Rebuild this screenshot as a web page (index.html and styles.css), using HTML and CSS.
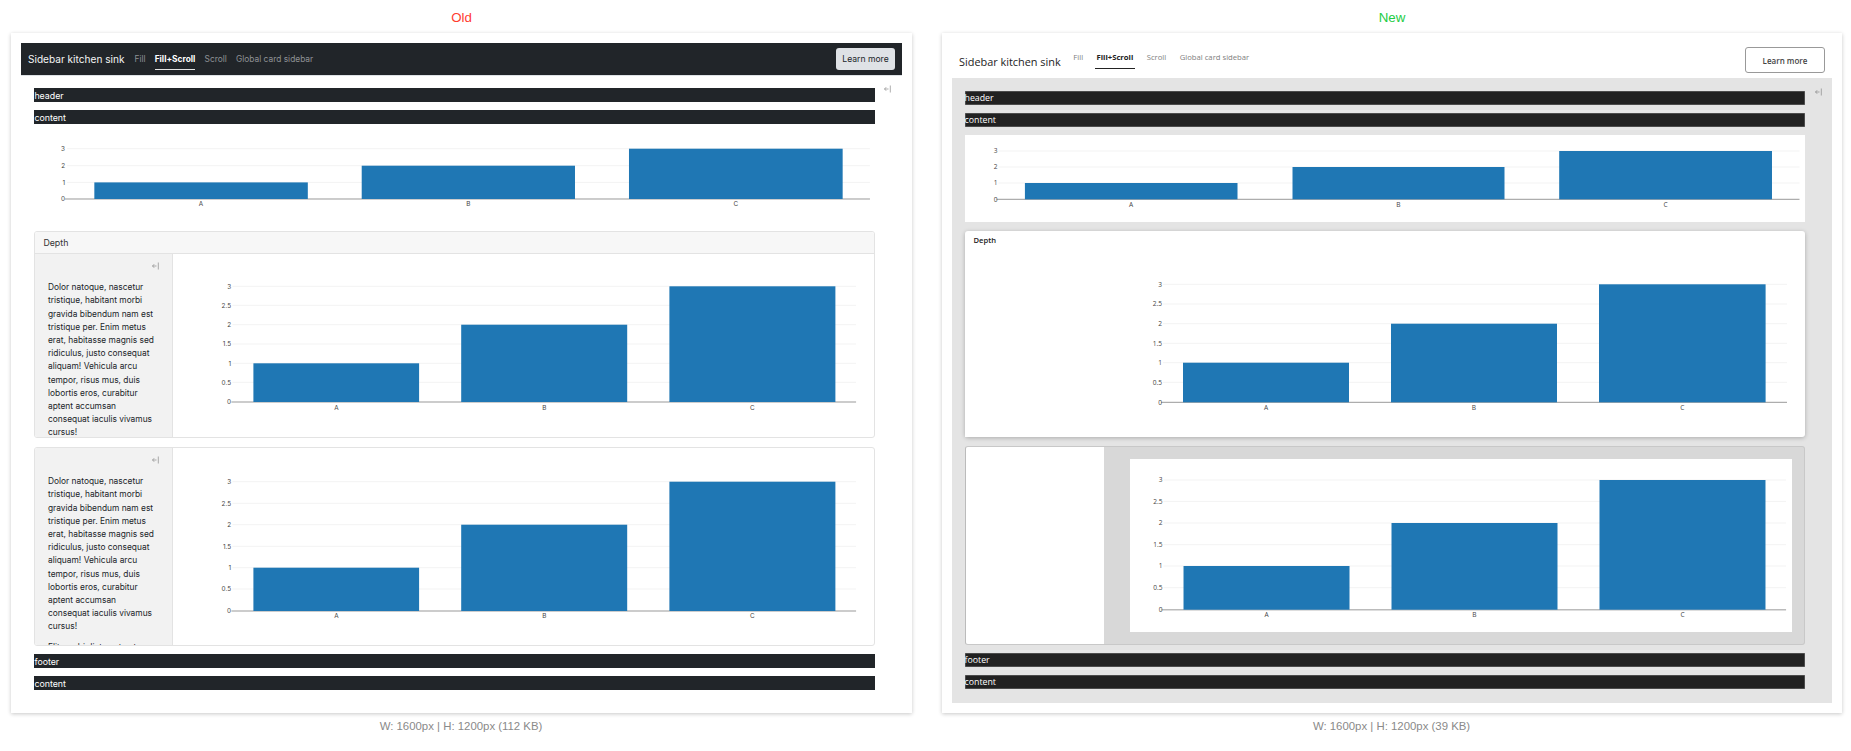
FILE: index.html
```html
<!DOCTYPE html>
<html lang="en">
<head>
<meta charset="utf-8">
<title>Sidebar kitchen sink</title>
<link rel="stylesheet" href="styles.css">
</head>
<body>
<div class="compare">
  <section class="col col-old">
    <h2 class="label label-old">Old</h2>
    <div class="shot">
      <nav class="nav-old">
        <span class="brand-old">Sidebar kitchen sink</span>
        <a class="link-old">Fill</a>
        <a class="link-old active">Fill+Scroll</a>
        <a class="link-old">Scroll</a>
        <a class="link-old">Global card sidebar</a>
        <button class="btn-old">Learn more</button>
      </nav>
      <main class="main-old">
        <svg class="collapse collapse-page-old" viewBox="0 0 7 8"><path d="M0.5 4H4.5M2.2 2.2L0.5 4L2.2 5.8M6.3 0.5V7.5"/></svg>
        <div class="bar bar-old">header</div>
        <div class="bar bar-old">content</div>
        <svg class="chart" width="840.6" height="90.4" viewBox="34 132.3 840.6 90.4">
          <path class="grid" d="M67 149H870M67 166H870M67 182.7H870"/>
          <path class="axis" d="M65 199.3H870"/>
          <rect class="col-bar" x="94.3" y="182.7" width="213.5" height="16.6"/>
          <rect class="col-bar" x="361.7" y="166" width="213.3" height="33.3"/>
          <rect class="col-bar" x="629" y="149" width="213.7" height="50.3"/>
          <text class="tick" text-anchor="end" x="65" y="151.3">3</text>
          <text class="tick" text-anchor="end" x="65" y="168.3">2</text>
          <text class="tick" text-anchor="end" x="65" y="185">1</text>
          <text class="tick" text-anchor="end" x="65" y="201.6">0</text>
          <text class="tick" text-anchor="middle" x="201" y="206.8">A</text>
          <text class="tick" text-anchor="middle" x="468.4" y="206.8">B</text>
          <text class="tick" text-anchor="middle" x="735.8" y="206.8">C</text>
        </svg>
        <div class="card-old card-depth-old">
          <div class="card-head-old">Depth</div>
          <div class="card-body-old">
            <aside class="side-old side-depth">
              <svg class="collapse" viewBox="0 0 7 8"><path d="M0.5 4H4.5M2.2 2.2L0.5 4L2.2 5.8M6.3 0.5V7.5"/></svg>
              <p>Dolor natoque, nascetur tristique, habitant morbi gravida bibendum nam est tristique per. Enim metus erat, habitasse magnis sed ridiculus, justo consequat aliquam! Vehicula arcu tempor, risus mus, duis lobortis eros, curabitur aptent accumsan consequat iaculis vivamus cursus!</p>
            </aside>
            <svg class="chart" width="703.4" height="184" viewBox="172.6 254 703.4 184">
              <path class="grid" d="M232 286.3H855.7M232 305.3H855.7M232 324.7H855.7M232 344H855.7M232 363.3H855.7M232 382.3H855.7"/>
              <path class="axis axis-light" d="M231 402H855.7"/>
              <rect class="col-bar" x="253" y="363.3" width="165.7" height="38.7"/>
              <rect class="col-bar" x="460.8" y="324.7" width="166" height="77.3"/>
              <rect class="col-bar" x="669" y="286.3" width="166" height="115.7"/>
              <text class="tick" text-anchor="end" x="230.7" y="288.6">3</text>
              <text class="tick" text-anchor="end" x="230.7" y="307.6">2.5</text>
              <text class="tick" text-anchor="end" x="230.7" y="327">2</text>
              <text class="tick" text-anchor="end" x="230.7" y="346.3">1.5</text>
              <text class="tick" text-anchor="end" x="230.7" y="365.6">1</text>
              <text class="tick" text-anchor="end" x="230.7" y="384.6">0.5</text>
              <text class="tick" text-anchor="end" x="230.7" y="404.3">0</text>
              <text class="tick" text-anchor="middle" x="336" y="409.8">A</text>
              <text class="tick" text-anchor="middle" x="544" y="409.8">B</text>
              <text class="tick" text-anchor="middle" x="752" y="409.8">C</text>
            </svg>
          </div>
        </div>
        <div class="card-old card-scroll-old">
          <div class="card-body-old">
            <aside class="side-old side-scroll">
              <svg class="collapse" viewBox="0 0 7 8"><path d="M0.5 4H4.5M2.2 2.2L0.5 4L2.2 5.8M6.3 0.5V7.5"/></svg>
              <p>Dolor natoque, nascetur tristique, habitant morbi gravida bibendum nam est tristique per. Enim metus erat, habitasse magnis sed ridiculus, justo consequat aliquam! Vehicula arcu tempor, risus mus, duis lobortis eros, curabitur aptent accumsan consequat iaculis vivamus cursus!</p>
              <p>Elit morbi dictumst natoque, nascetur tristique, habitant morbi gravida.</p>
            </aside>
            <svg class="chart" width="703.4" height="198.6" viewBox="172.6 447 703.4 198.6">
              <path class="grid" d="M232 480.7H855.7M232 502.3H855.7M232 523.7H855.7M232 545.3H855.7M232 566.7H855.7M232 588H855.7"/>
              <path class="axis axis-light" d="M231 610H855.7"/>
              <rect class="col-bar" x="253" y="566.7" width="165.7" height="43.3"/>
              <rect class="col-bar" x="460.8" y="523.7" width="166" height="86.3"/>
              <rect class="col-bar" x="669" y="480.7" width="166" height="129.3"/>
              <text class="tick" text-anchor="end" x="230.7" y="483">3</text>
              <text class="tick" text-anchor="end" x="230.7" y="504.6">2.5</text>
              <text class="tick" text-anchor="end" x="230.7" y="526">2</text>
              <text class="tick" text-anchor="end" x="230.7" y="547.6">1.5</text>
              <text class="tick" text-anchor="end" x="230.7" y="569">1</text>
              <text class="tick" text-anchor="end" x="230.7" y="590.3">0.5</text>
              <text class="tick" text-anchor="end" x="230.7" y="612.3">0</text>
              <text class="tick" text-anchor="middle" x="336" y="617.3">A</text>
              <text class="tick" text-anchor="middle" x="544" y="617.3">B</text>
              <text class="tick" text-anchor="middle" x="752" y="617.3">C</text>
            </svg>
          </div>
        </div>
        <div class="bar bar-old">footer</div>
        <div class="bar bar-old">content</div>
      </main>
    </div>
    <p class="caption">W: 1600px | H: 1200px (112 KB)</p>
  </section>

  <section class="col col-new">
    <h2 class="label label-new">New</h2>
    <div class="shot">
      <nav class="nav-new">
        <span class="brand-new">Sidebar kitchen sink</span>
        <a class="link-new">Fill</a>
        <a class="link-new active">Fill+Scroll</a>
        <a class="link-new">Scroll</a>
        <a class="link-new">Global card sidebar</a>
        <button class="btn-new">Learn more</button>
      </nav>
      <main class="main-new">
        <svg class="collapse collapse-page-new" viewBox="0 0 7 8"><path d="M0.5 4H4.5M2.2 2.2L0.5 4L2.2 5.8M6.3 0.5V7.5"/></svg>
        <div class="bar bar-new">header</div>
        <div class="bar bar-new">content</div>
        <div class="panel-new">
          <svg class="chart chart-new" width="840.5" height="86.3" viewBox="965.5 135.7 840.5 86.3">
            <path class="grid" d="M999 151.7H1800M999 167.7H1800M999 183.7H1800"/>
            <path class="axis" d="M997 200H1800"/>
            <rect class="col-bar" x="1025.4" y="183.7" width="212.6" height="16.3"/>
            <rect class="col-bar" x="1293" y="167.7" width="212" height="32.3"/>
            <rect class="col-bar" x="1559.7" y="151.7" width="212.8" height="48.3"/>
            <text class="tick" text-anchor="end" x="998" y="154">3</text>
            <text class="tick" text-anchor="end" x="998" y="170">2</text>
            <text class="tick" text-anchor="end" x="998" y="186">1</text>
            <text class="tick" text-anchor="end" x="998" y="202.3">0</text>
            <text class="tick" text-anchor="middle" x="1131.7" y="207.8">A</text>
            <text class="tick" text-anchor="middle" x="1399" y="207.8">B</text>
            <text class="tick" text-anchor="middle" x="1666" y="207.8">C</text>
          </svg>
        </div>
        <div class="card-new card-depth-new">
          <div class="card-head-new">Depth</div>
          <div class="card-body-new">
            <aside class="side-new"></aside>
            <svg class="chart chart-new" width="702" height="184" viewBox="1103 253 702 184">
              <path class="grid" d="M1163 284.3H1787M1163 304H1787M1163 323.7H1787M1163 343.3H1787M1163 362.7H1787M1163 382.3H1787"/>
              <path class="axis" d="M1161 402.3H1787"/>
              <rect class="col-bar" x="1183" y="362.7" width="166" height="39.6"/>
              <rect class="col-bar" x="1391" y="323.7" width="166" height="78.6"/>
              <rect class="col-bar" x="1599" y="284.3" width="166.6" height="118"/>
              <text class="tick" text-anchor="end" x="1162" y="286.6">3</text>
              <text class="tick" text-anchor="end" x="1162" y="306.3">2.5</text>
              <text class="tick" text-anchor="end" x="1162" y="326">2</text>
              <text class="tick" text-anchor="end" x="1162" y="345.6">1.5</text>
              <text class="tick" text-anchor="end" x="1162" y="365">1</text>
              <text class="tick" text-anchor="end" x="1162" y="384.6">0.5</text>
              <text class="tick" text-anchor="end" x="1162" y="404.6">0</text>
              <text class="tick" text-anchor="middle" x="1266" y="409.8">A</text>
              <text class="tick" text-anchor="middle" x="1474" y="409.8">B</text>
              <text class="tick" text-anchor="middle" x="1682.3" y="409.8">C</text>
            </svg>
          </div>
        </div>
        <div class="card-new card-scroll-new">
          <aside class="side-new"></aside>
          <div class="well-new">
            <svg class="chart chart-new" width="662" height="172.4" viewBox="1129.5 459.3 662 172.4">
              <path class="grid" d="M1163 480.3H1785.6M1163 501.7H1785.6M1163 523.3H1785.6M1163 545H1785.6M1163 566.3H1785.6M1163 588H1785.6"/>
              <path class="axis axis-light" d="M1161 610H1785.6"/>
              <rect class="col-bar" x="1183" y="566.3" width="166" height="43.7"/>
              <rect class="col-bar" x="1391" y="523.3" width="166" height="86.7"/>
              <rect class="col-bar" x="1599" y="480.3" width="166" height="129.7"/>
              <text class="tick" text-anchor="end" x="1162" y="482.6">3</text>
              <text class="tick" text-anchor="end" x="1162" y="504">2.5</text>
              <text class="tick" text-anchor="end" x="1162" y="525.6">2</text>
              <text class="tick" text-anchor="end" x="1162" y="547.3">1.5</text>
              <text class="tick" text-anchor="end" x="1162" y="568.6">1</text>
              <text class="tick" text-anchor="end" x="1162" y="590.3">0.5</text>
              <text class="tick" text-anchor="end" x="1162" y="612.3">0</text>
              <text class="tick" text-anchor="middle" x="1266" y="617.3">A</text>
              <text class="tick" text-anchor="middle" x="1474" y="617.3">B</text>
              <text class="tick" text-anchor="middle" x="1682" y="617.3">C</text>
            </svg>
          </div>
        </div>
        <div class="bar bar-new">footer</div>
        <div class="bar bar-new">content</div>
      </main>
    </div>
    <p class="caption">W: 1600px | H: 1200px (39 KB)</p>
  </section>
</div>
</body>
</html>
```

FILE: styles.css
```css
* { box-sizing: border-box; }
html, body { margin: 0; padding: 0; background: #fff; overflow: hidden; }
body { font-family: "Liberation Sans", Arial, sans-serif; }
.compare { display: flex; gap: 30px; padding-left: 11px; }
.col { display: flex; flex-direction: column; }
.col-old { width: 901px; }
.col-new { width: 900px; }
.label { margin: 0; height: 33px; padding-top: 9.5px; font-size: 13.3px; line-height: 16px; font-weight: 400; text-align: center; }
.label-old { color: #ff3b30; }
.label-new { color: #22cc44; }
.shot { height: 680px; padding: 10px; background: #fff; box-shadow: 0 1px 4px rgba(0,0,0,.22); }
.caption { margin: 0; padding-top: 6px; padding-right: 1px; font-size: 11.4px; line-height: 14px; color: #8a8a8a; text-align: center; }

.chart { display: block; flex: none; }
.grid { stroke: #f3f3f3; stroke-width: 1; fill: none; }
.axis { stroke: #999; stroke-width: 1; fill: none; }
.axis-light { stroke: #bbb; stroke-width: 1.4; }
.col-bar { fill: #1f77b4; }
.tick { font-family: Inter, sans-serif; font-size: 6.4px; fill: #444; }
.chart-new .tick { font-family: "Open Sans", sans-serif; font-size: 6.6px; }
.collapse { display: block; width: 7px; height: 8px; }
.collapse path { fill: none; stroke: #777; stroke-width: .6; }

/* Old */
.nav-old { height: 33px; display: flex; align-items: center; background: #212529; border-bottom: 1px solid #dee2e6; padding: 0 7px; font-family: Inter, sans-serif; }
.brand-old { font-size: 10.1px; color: #f5f5f5; margin-right: 10px; }
.link-old { font-size: 8.4px; color: #8f9295; margin-right: 9.2px; padding: 6px 0 5px; border-bottom: 1px solid transparent; }
.link-old.active { color: #fff; font-weight: 700; border-bottom-color: #e4e4e4; }
.btn-old { margin-left: auto; width: 59px; height: 21.5px; padding: 0; border: 0; border-radius: 3px; background: #dfe2e6; color: #212529; font-family: inherit; font-size: 8.6px; }

.main-old { position: relative; display: flex; flex-direction: column; gap: 8px; padding: 12.3px 27px 0 13.4px; font-family: Inter, sans-serif; }
.collapse-page-old { position: absolute; top: 9px; right: 11px; }
.bar { height: 14px; font-size: 8.8px; line-height: 15px; color: #fff; flex: none; }
.bar-old { background: #212529; }
.card-old { border: 1px solid #e3e3e3; border-radius: 3px; overflow: hidden; flex: none; }
.card-depth-old { height: 207px; margin-top: 0; }
.card-scroll-old { height: 199px; margin-top: 1px; }
.card-head-old { height: 22px; padding: 0 8px; font-size: 8.8px; line-height: 21px; background: #f7f7f7; color: #333; border-bottom: 1px solid #e3e3e3; }
.card-body-old { display: flex; height: 100%; }
.card-depth-old .card-body-old { height: 184px; }
.side-old { width: 137.2px; flex: none; overflow: hidden; background: #f2f2f2; border-right: 1px solid #e3e3e3; padding: 8px 12px 0 12.6px; font-size: 8.4px; line-height: 13.2px; color: #212529; }
.side-old .collapse { margin-left: auto; margin-right: 1px; }
.side-old p { margin: 11.5px 0 0; }
.side-old p + p { margin-top: 7.5px; }

/* New */
.nav-new { height: 34.7px; display: flex; align-items: center; padding: 0 7px; font-family: "Open Sans", sans-serif; }
.brand-new { font-size: 10.9px; color: #222; margin-right: 12.6px; position: relative; top: 1px; }
.link-new { font-size: 7.7px; color: #808080; margin-right: 11.4px; padding: 4px 2px 6px; margin-left: -2px; border-bottom: 1px solid transparent; position: relative; top: -2px; }
.link-new.active { color: #222; font-weight: 700; border-bottom-color: #222; }
.btn-new { margin-left: auto; width: 80px; height: 26px; padding: 0; border: 1px solid #999; border-radius: 3px; background: #fff; color: #444; font-family: inherit; font-size: 8px; font-weight: 600; }

.main-new { position: relative; height: 625px; background: #e4e4e4; display: flex; flex-direction: column; gap: 8px; padding: 13.6px 27px 0 12.5px; font-family: "Open Sans", sans-serif; }
.collapse-page-new { position: absolute; top: 10.5px; right: 10.5px; }
.bar-new { background: #212121; box-shadow: inset 0 0 0 .5px #777; }
.panel-new { background: #fff; flex: none; height: 86.3px; }
.card-new { background: #fff; border-radius: 3px; flex: none; overflow: hidden; }
.card-depth-new { height: 206px; margin-top: 1px; box-shadow: 0 1px 4px rgba(0,0,0,.25); overflow: visible; }
.card-head-new { height: 22px; padding: 0 9px; font-size: 7.6px; font-weight: 600; line-height: 18px; color: #222; }
.card-body-new { display: flex; }
.side-new { width: 138px; flex: none; background: #fff; }
.card-scroll-new { height: 198.6px; margin-top: 1.7px; display: flex; border: 1px solid #c8c8c8; border-left-color: #bbb; background: #d8d8d8; }
.well-new { flex: 1; padding: 12px 12px 0 26px; }
.well-new .chart { background: #fff; }
```
